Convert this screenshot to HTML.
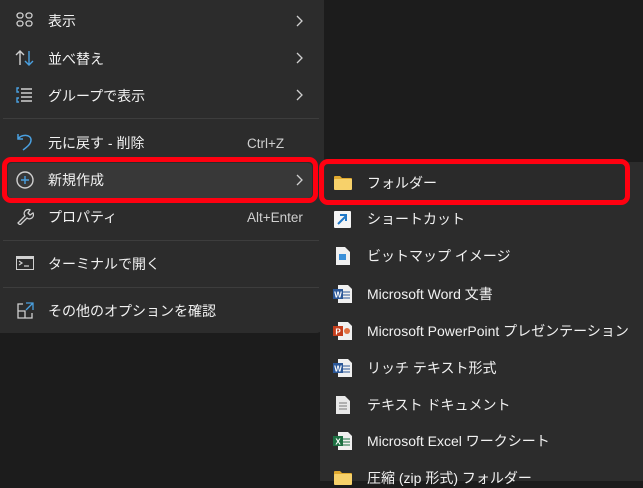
<!DOCTYPE html>
<html><head><meta charset="utf-8"><style>
*{margin:0;padding:0;box-sizing:border-box}
html,body{width:643px;height:481px}
body{background:#1c1c1c;position:relative;overflow:hidden;font-family:"Liberation Sans","Noto Sans CJK JP",sans-serif;color:#f2f2f2;font-size:14px}
.menu{position:absolute;background:#2c2c2c}
.t{position:absolute;white-space:nowrap;line-height:20px}
.sep{position:absolute;left:3px;width:316px;height:1px;background:#3d3d3d}
.arr{position:absolute;left:295px}
.sc{position:absolute;color:#cfcfcf;font-size:13.5px;line-height:20px}
.red{position:absolute;border:5px solid #ff0010;border-radius:9px}
.ic{position:absolute}
</style></head><body>
<div class="menu" style="left:0;top:0;width:324px;height:333px;border-radius:0 0 8px 0"></div>
<div style="position:absolute;left:8px;top:163px;width:304px;height:35px;background:#383838;border-radius:4px"></div>

<svg class="ic" style="left:16px;top:12px" width="18" height="16" viewBox="0 0 18 16" fill="none" stroke="#d0d0d0" stroke-width="1.3"><rect x="1" y="1" width="6" height="5" rx="2.5"/><rect x="10" y="1" width="6" height="5" rx="2.5"/><rect x="1" y="9" width="6" height="5" rx="2.5"/><rect x="10" y="9" width="6" height="5" rx="2.5"/></svg>
<div class="t" style="left:48px;top:11px">表示</div>
<svg class="arr" style="top:15px" width="8" height="12" viewBox="0 0 8 12" fill="none" stroke="#cfcfcf" stroke-width="1.3"><path d="M2 1l5 5-5 5"/></svg>

<svg class="ic" style="left:15px;top:50px" width="20" height="16" viewBox="0 0 20 16" fill="none" stroke-width="1.4"><path d="M5 15V1M1 5l4-4 4 4" stroke="#d0d0d0"/><path d="M14 1v14M10 11l4 4 4-4" stroke="#4aa0e0"/></svg>
<div class="t" style="left:48px;top:49px">並べ替え</div>
<svg class="arr" style="top:52px" width="8" height="12" viewBox="0 0 8 12" fill="none" stroke="#cfcfcf" stroke-width="1.3"><path d="M2 1l5 5-5 5"/></svg>

<svg class="ic" style="left:16px;top:87px" width="18" height="16" viewBox="0 0 18 16" fill="none" stroke-width="1.4"><path d="M3 1H1v4h2M3 11H1v4h2" stroke="#4aa0e0"/><path d="M5 2h11M5 6h11M5 10h11M5 14h11" stroke="#d0d0d0"/></svg>
<div class="t" style="left:48px;top:86px">グループで表示</div>
<svg class="arr" style="top:89px" width="8" height="12" viewBox="0 0 8 12" fill="none" stroke="#cfcfcf" stroke-width="1.3"><path d="M2 1l5 5-5 5"/></svg>

<div class="sep" style="top:118px"></div>

<svg class="ic" style="left:16px;top:133px" width="18" height="18" viewBox="0 0 18 18" fill="none" stroke="#4aa0e0" stroke-width="1.5"><path d="M2 1v5h5"/><path d="M2 6C5 1 15 1 15 7c0 4-4 7-8 10"/></svg>
<div class="t" style="left:48px;top:133px">元に戻す - 削除</div><div class="sc" style="left:247px;top:134px">Ctrl+Z</div>

<svg class="ic" style="left:15px;top:170px" width="20" height="20" viewBox="0 0 20 20" fill="none" stroke-width="1.4"><circle cx="10" cy="10" r="8" stroke="#d0d0d0"/><path d="M10 6v8M6 10h8" stroke="#4aa0e0"/></svg>
<div class="t" style="left:48px;top:170px">新規作成</div>
<svg class="arr" style="top:174px" width="8" height="12" viewBox="0 0 8 12" fill="none" stroke="#cfcfcf" stroke-width="1.3"><path d="M2 1l5 5-5 5"/></svg>

<svg class="ic" style="left:16px;top:207px" width="18" height="18" viewBox="0 0 18 18" fill="none" stroke="#d0d0d0" stroke-width="1.3"><path d="M2 16l7-7a4 4 0 0 1 5-6l-2 3 2 2 3-2a4 4 0 0 1-6 5l-7 7z"/></svg>
<div class="t" style="left:48px;top:207px">プロパティ</div><div class="sc" style="left:247px;top:208px">Alt+Enter</div>

<div class="sep" style="top:240px"></div>

<svg class="ic" style="left:16px;top:256px" width="18" height="14" viewBox="0 0 18 14"><rect width="18" height="14" fill="#d0d0d0"/><rect x="1" y="3" width="16" height="10" fill="#2c2c2c"/><path d="M3 5l3 2-3 2M8 10h5" stroke="#d0d0d0" stroke-width="1.2" fill="none"/></svg>
<div class="t" style="left:48px;top:254px">ターミナルで開く</div>

<div class="sep" style="top:287px"></div>

<svg class="ic" style="left:16px;top:302px" width="18" height="18" viewBox="0 0 18 18" fill="none" stroke-width="1.3"><path d="M7 2H2v14h14v-5" stroke="#d0d0d0"/><path d="M2 9h7v7" stroke="#d0d0d0"/><path d="M10 1h7v7M17 1l-7 7" stroke="#4aa0e0"/></svg>
<div class="t" style="left:48px;top:301px">その他のオプションを確認</div>

<div class="menu" style="left:320px;top:162px;width:323px;height:319px;border-radius:8px 0 0 0"></div>
<div style="position:absolute;left:325px;top:165px;width:300px;height:35px;background:#2a2a2a"></div>

<svg class="ic" style="left:334px;top:175px" width="18" height="15" viewBox="0 0 18 15"><path d="M0 2a1 1 0 0 1 1-1h5l2 2h9a1 1 0 0 1 1 1v10H0z" fill="#e0a92f"/><rect y="4" width="18" height="11" rx="1" fill="#f7d16a"/></svg>
<div class="t" style="left:367px;top:173px">フォルダー</div>

<svg class="ic" style="left:334px;top:211px" width="17" height="17" viewBox="0 0 17 17"><rect width="17" height="17" rx="1" fill="#f5f5f5"/><path d="M4 13l8-8M6 4h6v6" stroke="#1f78c8" stroke-width="2" fill="none"/></svg>
<div class="t" style="left:367px;top:209px">ショートカット</div>

<svg class="ic" style="left:336px;top:247px" width="14" height="18" viewBox="0 0 14 18"><path d="M0 0h9l5 5v13H0z" fill="#f0f0f0"/><rect x="3" y="7" width="7" height="6" fill="#3a8fd8"/></svg>
<div class="t" style="left:367px;top:246px">ビットマップ イメージ</div>

<svg class="ic" style="left:333px;top:285px" width="19" height="18" viewBox="0 0 19 18"><path d="M5 0h10l4 4v14H5z" fill="#f0f0f0"/><path d="M10 7h7M10 10h7M10 13h7" stroke="#2b5797"/><rect y="4" width="10" height="10" fill="#2b5797"/><text x="5" y="12.5" font-size="8" fill="#fff" text-anchor="middle" font-family="Liberation Sans" font-weight="bold">W</text></svg>
<div class="t" style="left:367px;top:284px">Microsoft Word 文書</div>

<svg class="ic" style="left:333px;top:322px" width="19" height="18" viewBox="0 0 19 18"><path d="M5 0h10l4 4v14H5z" fill="#f0f0f0"/><circle cx="14" cy="9" r="3" fill="#e07040"/><rect y="4" width="10" height="10" fill="#c43e1c"/><text x="5" y="12.5" font-size="8" fill="#fff" text-anchor="middle" font-family="Liberation Sans" font-weight="bold">P</text></svg>
<div class="t" style="left:367px;top:321px">Microsoft PowerPoint プレゼンテーション</div>

<svg class="ic" style="left:333px;top:359px" width="19" height="18" viewBox="0 0 19 18"><path d="M5 0h10l4 4v14H5z" fill="#f0f0f0"/><path d="M10 7h7M10 10h7M10 13h7" stroke="#2b5797"/><rect y="4" width="10" height="10" fill="#2b5797"/><text x="5" y="12.5" font-size="8" fill="#fff" text-anchor="middle" font-family="Liberation Sans" font-weight="bold">W</text></svg>
<div class="t" style="left:367px;top:358px">リッチ テキスト形式</div>

<svg class="ic" style="left:336px;top:396px" width="14" height="18" viewBox="0 0 14 18"><path d="M0 0h9l5 5v13H0z" fill="#e8e8e8"/><path d="M3 7h8M3 10h8M3 13h8" stroke="#777"/></svg>
<div class="t" style="left:367px;top:395px">テキスト ドキュメント</div>

<svg class="ic" style="left:333px;top:432px" width="19" height="18" viewBox="0 0 19 18"><path d="M5 0h10l4 4v14H5z" fill="#f0f0f0"/><path d="M10 7h7M10 10h7M10 13h7" stroke="#1d6f42"/><rect y="4" width="10" height="10" fill="#1d6f42"/><text x="5" y="12.5" font-size="8" fill="#fff" text-anchor="middle" font-family="Liberation Sans" font-weight="bold">X</text></svg>
<div class="t" style="left:367px;top:431px">Microsoft Excel ワークシート</div>

<svg class="ic" style="left:334px;top:470px" width="18" height="15" viewBox="0 0 18 15"><path d="M0 2a1 1 0 0 1 1-1h5l2 2h9a1 1 0 0 1 1 1v10H0z" fill="#e0a92f"/><rect y="4" width="18" height="11" rx="1" fill="#f7d16a"/></svg>
<div class="t" style="left:367px;top:468px">圧縮 (zip 形式) フォルダー</div>

<div class="red" style="left:2px;top:157px;width:316px;height:46px"></div>
<div class="red" style="left:319px;top:159px;width:311px;height:46px"></div>
</body></html>
